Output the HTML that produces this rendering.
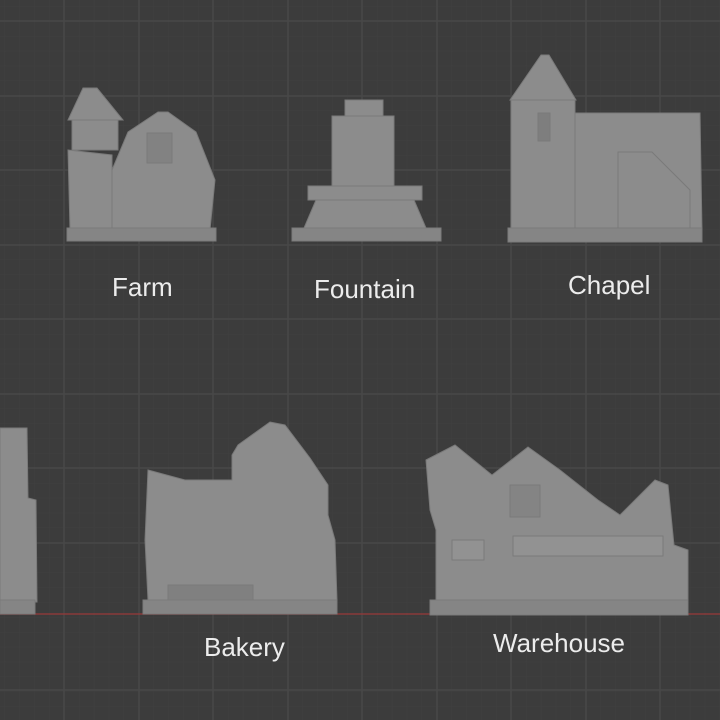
<!DOCTYPE html>
<html><head><meta charset="utf-8"><style>
html,body{margin:0;padding:0;width:720px;height:720px;overflow:hidden;background:#3c3c3c}
svg{display:block}
text{font-family:"Liberation Sans",sans-serif;font-size:26px;fill:#ececec}
</style></head><body>
<svg width="720" height="720" viewBox="0 0 720 720">
<defs>
<pattern id="minor" width="14.9" height="14.9" patternUnits="userSpaceOnUse" x="64" y="21">
<path d="M0 0H14.9M0 0V14.9" stroke="#404040" stroke-width="1" fill="none"/>
</pattern>
</defs>
<rect width="720" height="720" fill="#3c3c3c"/>
<rect width="720" height="720" fill="url(#minor)"/>
<g stroke="#484848" stroke-width="1.5">
<line x1="64" y1="0" x2="64" y2="720"/><line x1="139" y1="0" x2="139" y2="720"/><line x1="213" y1="0" x2="213" y2="720"/><line x1="288" y1="0" x2="288" y2="720"/><line x1="362" y1="0" x2="362" y2="720"/><line x1="437" y1="0" x2="437" y2="720"/><line x1="511" y1="0" x2="511" y2="720"/><line x1="586" y1="0" x2="586" y2="720"/><line x1="660" y1="0" x2="660" y2="720"/>
<line y1="21" x1="0" y2="21" x2="720"/><line y1="96" x1="0" y2="96" x2="720"/><line y1="170" x1="0" y2="170" x2="720"/><line y1="245" x1="0" y2="245" x2="720"/><line y1="319" x1="0" y2="319" x2="720"/><line y1="394" x1="0" y2="394" x2="720"/><line y1="468" x1="0" y2="468" x2="720"/><line y1="543" x1="0" y2="543" x2="720"/><line y1="690" x1="0" y2="690" x2="720"/>
</g>
<line x1="0" y1="614" x2="720" y2="614" stroke="#8a3a3a" stroke-width="1.5"/>

<g fill="#8c8c8c" stroke="#7a7a7a" stroke-width="1">
<!-- Farm -->
<polygon points="83,88 97,88 123,120 68,120"/>
<rect x="72" y="120" width="46" height="30"/>
<polygon points="68,150 112,155 112,230 70,230"/>
<polygon points="112,170 128,132 158,112 168,112 196,132 215,180 210,230 112,230"/>
<rect x="67" y="228" width="149" height="13" fill="#858585"/>
<rect x="147" y="133" width="25" height="30" fill="#828282"/>
<!-- Fountain -->
<rect x="345" y="100" width="38" height="16"/>
<rect x="332" y="116" width="62" height="72"/>
<rect x="308" y="186" width="114" height="14"/>
<polygon points="316,200 414,200 420,214 426,228 304,228 310,214"/>
<rect x="292" y="228" width="149" height="13" fill="#858585"/>
<!-- Chapel -->
<polygon points="541,55 549,55 576,100 510,100"/>
<rect x="511" y="100" width="64" height="130"/>
<polygon points="575,113 700,113 702,230 575,230"/>
<polygon points="618,152 652,152 680,180 690,190 690,230 618,230"/>
<rect x="508" y="228" width="194" height="14" fill="#858585"/>
<rect x="538" y="113" width="12" height="28" fill="#7e7e7e"/>
<!-- left partial -->
<polygon points="0,428 27,428 28,498 36,500 37,602 0,602"/>
<rect x="0" y="600" width="35" height="14" fill="#858585"/>
<!-- Bakery -->
<polygon points="148,470 185,480 232,480 232,455 238,445 270,422 285,425 310,458 328,485 328,515 335,540 337,600 148,600 145,540"/>
<rect x="143" y="600" width="194" height="14" fill="#858585"/>
<rect x="168" y="585" width="85" height="15" fill="#808080"/>
<!-- Warehouse -->
<polygon points="426,460 455,445 492,475 528,447 560,470 598,500 620,515 655,480 668,485 674,545 688,550 688,600 436,600 436,530 430,510"/>
<rect x="430" y="600" width="258" height="15" fill="#858585"/>
<rect x="510" y="485" width="30" height="32" fill="#848484"/>
<rect x="513" y="536" width="150" height="20" fill="#929292"/>
<rect x="452" y="540" width="32" height="20" fill="#929292"/>
</g>

<text x="112" y="296">Farm</text>
<text x="314" y="298">Fountain</text>
<text x="568" y="294">Chapel</text>
<text x="204" y="656">Bakery</text>
<text x="493" y="652">Warehouse</text>
</svg>
</body></html>
